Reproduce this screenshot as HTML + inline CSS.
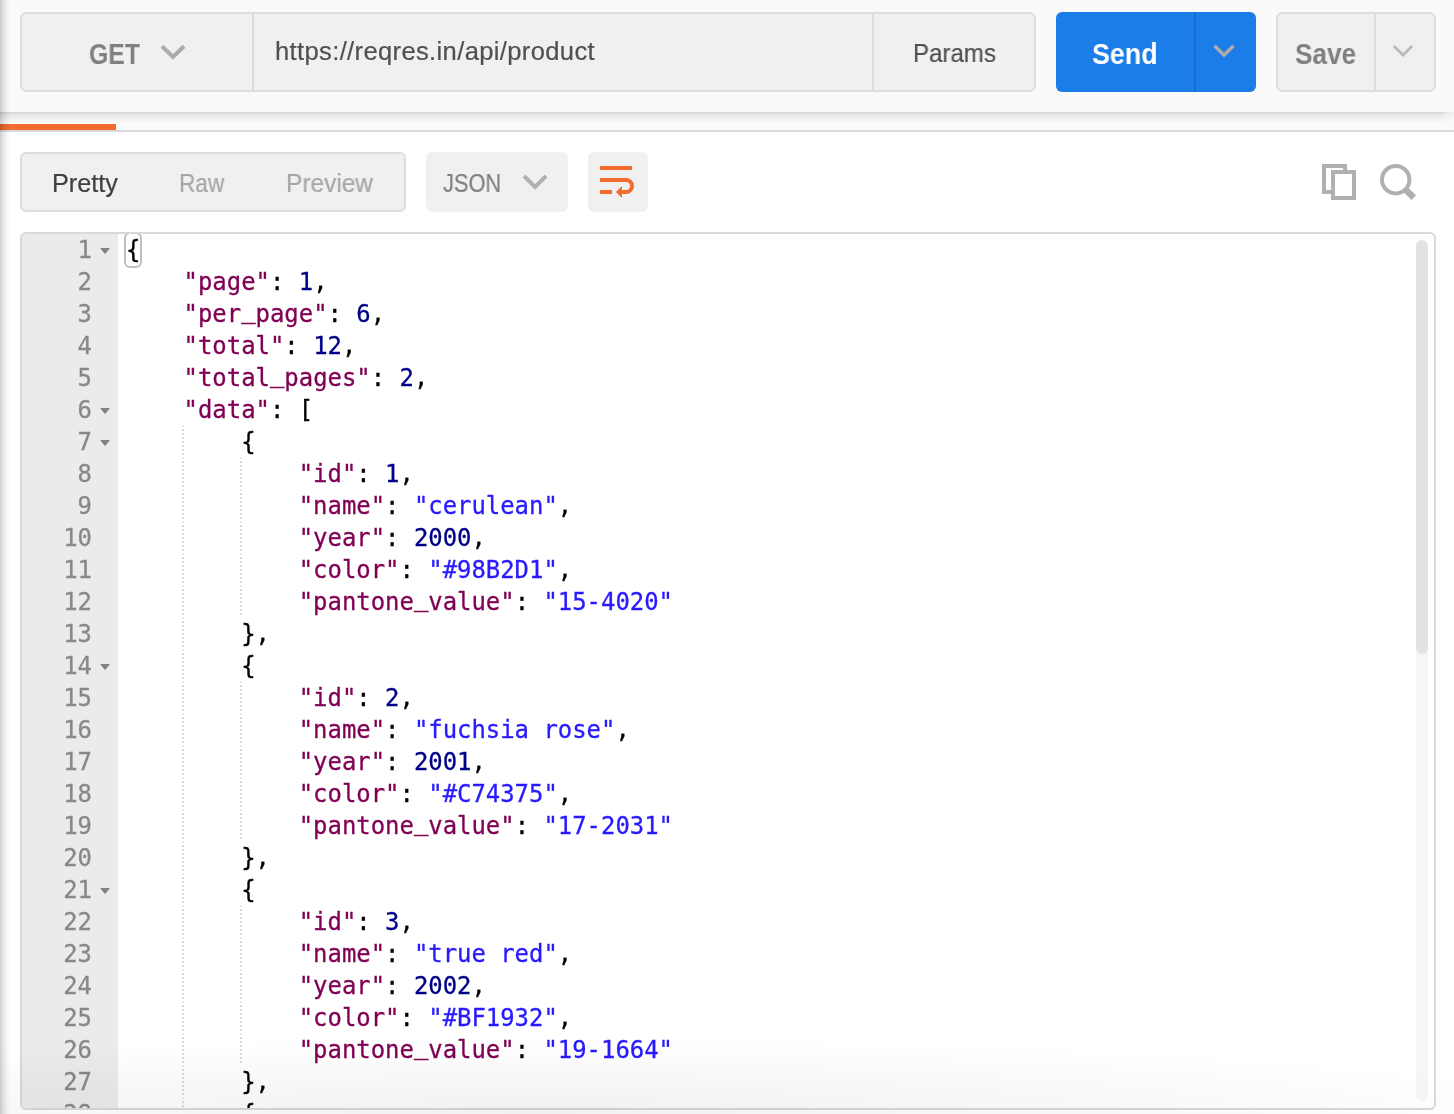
<!DOCTYPE html>
<html lang="en">
<head>
<meta charset="utf-8">
<title>Postman</title>
<style>
html,body{margin:0;padding:0;}
body{width:1454px;height:1114px;overflow:hidden;background:#fff;position:relative;
  font-family:"Liberation Sans","DejaVu Sans",sans-serif;color:#505050;}
*{box-sizing:border-box;}
.abs{position:absolute;}
/* top request bar */
#topbar{left:0;top:0;width:1454px;height:112px;background:#fafafa;}
#subbar{left:0;top:112px;width:1454px;height:20px;background:#fafafa;border-bottom:2px solid #dadada;}
#subshadow{left:0;top:112px;width:1454px;height:11px;background:linear-gradient(to bottom,#d6d6d6 0,#e6e6e6 3px,#f2f2f2 7px,#fafafa 11px);}
#active{left:0;top:124px;width:116px;height:6px;background:#f06c30;}
#urlbox{left:20px;top:12px;width:1016px;height:80px;background:#f0f0f0;border:2px solid #dcdcdc;border-radius:6px;}
.vdiv{width:2px;background:#dcdcdc;}
.t{position:absolute;white-space:nowrap;line-height:1;transform-origin:0 0;will-change:transform;}
#get{left:89px;top:39.8px;font-size:29px;font-weight:bold;color:#808080;transform:scaleX(.855);}
#url{left:274.5px;top:38.8px;font-size:25px;color:#505050;letter-spacing:.35px;transform:scaleX(1.022);-webkit-text-stroke:.2px;}
#params{left:912.5px;top:40.7px;font-size:25px;color:#505050;transform:scaleX(.962);-webkit-text-stroke:.2px;}
#send{left:1056px;top:12px;width:200px;height:80px;background:#1b7de8;border-radius:6px;}
#sendt{left:1091.5px;top:39.5px;font-size:29px;font-weight:bold;color:#fff;transform:scaleX(.925);}
#save{left:1276px;top:12px;width:160px;height:80px;background:#f0f0f0;border:2px solid #dcdcdc;border-radius:6px;}
#savet{left:1295px;top:39.5px;font-size:29px;font-weight:bold;color:#808080;transform:scaleX(.903);}
/* response toolbar */
#tabs{left:20px;top:152px;width:386px;height:60px;background:#f0f0f0;border:2px solid #dcdcdc;border-radius:6px;}
#pretty{left:52px;top:170.6px;font-size:25px;color:#404040;transform:scaleX(1.01);-webkit-text-stroke:.2px;}
#raw{left:179.3px;top:170.6px;font-size:25px;color:#a6a6a6;transform:scaleX(.905);-webkit-text-stroke:.2px;}
#preview{left:285.5px;top:170.6px;font-size:25px;color:#a6a6a6;transform:scaleX(.978);-webkit-text-stroke:.2px;}
#json{left:426px;top:152px;width:142px;height:60px;background:#f0f0f0;border-radius:6px;}
#jsont{left:443px;top:170.6px;font-size:25px;color:#808080;transform:scaleX(.873);-webkit-text-stroke:.2px;}
#wrap{left:588px;top:152px;width:60px;height:60px;background:#f0f0f0;border-radius:6px;}
svg{position:absolute;overflow:visible;}
/* editor */
#editor{left:20px;top:232px;width:1416px;height:878px;border:2px solid #d9d9d9;border-radius:6px;overflow:hidden;background:#fff;}
#gutter{left:0;top:0;width:96px;height:900px;background:#ebebeb;}
.mono{font-family:"DejaVu Sans Mono","Liberation Mono",monospace;font-size:23.92px;line-height:32px;will-change:transform;-webkit-text-stroke:.3px;}
.gl{position:relative;height:32px;color:#888;text-align:right;padding-right:26px;white-space:pre;}
.fa{position:absolute;left:78px;top:14px;width:0;height:0;border-left:5px solid transparent;border-right:5px solid transparent;border-top:6px solid #808080;}
#code{left:104px;top:0;width:1300px;color:#000;}
.cl{position:relative;height:32px;white-space:pre;}
.k{color:rgb(127,0,85);}
.u{font-weight:normal;position:relative;top:-4px;}
.n{color:#00008b;}
.s{color:rgb(40,26,255);}
.g{position:absolute;top:0;width:2px;height:32px;background:linear-gradient(#fff,#fff) 0 31px/2px 1px no-repeat,linear-gradient(to bottom,transparent 0,transparent 1px,#d9d9d9 1px,#d9d9d9 3px,transparent 3px) 0 2px/2px 4px repeat-y;}
.g1{left:56px;}
.g2{left:114px;}
#bracket{left:102px;top:-2px;width:18px;height:36px;border:2px solid #c0c0c0;border-radius:6px;}
#track{left:1394px;top:6px;width:12px;height:861px;border-radius:6px;background:#f6f6f6;}
#thumb{left:1394px;top:6px;width:12px;height:414px;border-radius:6px;background:#e2e2e2;}
#botshadow{left:0;top:1034px;width:1454px;height:80px;background:radial-gradient(ellipse 1050px 76px at 540px 100%,rgba(0,0,0,.055),rgba(0,0,0,.03) 45%,rgba(0,0,0,0) 100%);}
#leftshadow{left:0;top:0;width:10px;height:1114px;background:linear-gradient(to right,rgba(0,0,0,.19) 0,rgba(0,0,0,.08) 4px,rgba(0,0,0,0) 10px);}
</style>
</head>
<body>
<div id="topbar" class="abs"></div>
<div id="subbar" class="abs"></div>
<div id="subshadow" class="abs"></div>
<div id="active" class="abs"></div>
<div class="abs" style="left:1440px;top:112px;width:14px;height:12px;background:linear-gradient(to right,rgba(250,250,250,0),rgba(250,250,250,.75))"></div>

<div id="urlbox" class="abs"></div>
<div class="abs vdiv" style="left:252px;top:14px;height:76px"></div>
<div class="abs vdiv" style="left:872px;top:14px;height:76px"></div>
<div id="get" class="t">GET</div>
<svg style="left:159px;top:43px" width="28" height="20" viewBox="0 0 28 20"><path d="M3 3.2 L14 14 L25 3.2" fill="none" stroke="#ababab" stroke-width="4"/></svg>
<div id="url" class="t">https://reqres.in/api/product</div>
<div id="params" class="t">Params</div>

<div id="send" class="abs"></div>
<div class="abs" style="left:1194px;top:12px;width:2px;height:80px;background:#1a6fcd"></div>
<div id="sendt" class="t">Send</div>
<svg style="left:1212px;top:43px" width="24" height="16" viewBox="0 0 24 16"><path d="M2.5 2.8 L12 12 L21.5 2.8" fill="none" stroke="#adadad" stroke-width="3.6"/></svg>

<div id="save" class="abs"></div>
<div class="abs vdiv" style="left:1374px;top:14px;height:76px"></div>
<div id="savet" class="t">Save</div>
<svg style="left:1391px;top:43px" width="24" height="16" viewBox="0 0 24 16"><path d="M2.8 3 L12 12 L21.2 3" fill="none" stroke="#b9b9b9" stroke-width="2.8"/></svg>

<div id="tabs" class="abs"></div>
<div id="pretty" class="t">Pretty</div>
<div id="raw" class="t">Raw</div>
<div id="preview" class="t">Preview</div>
<div id="json" class="abs"></div>
<div id="jsont" class="t">JSON</div>
<svg style="left:521px;top:172px" width="28" height="20" viewBox="0 0 28 20"><path d="M3 4 L14 15 L25 4" fill="none" stroke="#b0b0b0" stroke-width="4"/></svg>
<div id="wrap" class="abs"></div>
<svg style="left:588px;top:152px" width="60" height="60" viewBox="0 0 60 60"><g fill="none" stroke="#f06c30" stroke-width="4"><path d="M12 16H44"/><path d="M12 28H38a6 6 0 0 1 0 12H33"/><path d="M12 40H24"/></g><path d="M28 40L34 34V46Z" fill="#f06c30"/></svg>

<svg style="left:1320px;top:160px" width="100" height="44" viewBox="1320 160 100 44"><g fill="none" stroke="#b0b0b0" stroke-width="4"><rect x="1324" y="166" width="21" height="26"/><rect x="1333" y="172" width="21" height="26" fill="#fff"/><circle cx="1395.7" cy="179.7" r="13.7"/></g><path d="M1405.6 189.6L1413.8 197.6" stroke="#b0b0b0" stroke-width="6.4" fill="none"/></svg>

<div id="editor" class="abs">
  <div id="gutter" class="abs mono">
<div class="gl">1<i class="fa"></i></div>
<div class="gl">2</div>
<div class="gl">3</div>
<div class="gl">4</div>
<div class="gl">5</div>
<div class="gl">6<i class="fa"></i></div>
<div class="gl">7<i class="fa"></i></div>
<div class="gl">8</div>
<div class="gl">9</div>
<div class="gl">10</div>
<div class="gl">11</div>
<div class="gl">12</div>
<div class="gl">13</div>
<div class="gl">14<i class="fa"></i></div>
<div class="gl">15</div>
<div class="gl">16</div>
<div class="gl">17</div>
<div class="gl">18</div>
<div class="gl">19</div>
<div class="gl">20</div>
<div class="gl">21<i class="fa"></i></div>
<div class="gl">22</div>
<div class="gl">23</div>
<div class="gl">24</div>
<div class="gl">25</div>
<div class="gl">26</div>
<div class="gl">27</div>
<div class="gl">28<i class="fa"></i></div>
  </div>
  <div id="bracket" class="abs"></div>
  <div id="code" class="abs mono">
<div class="cl">{</div>
<div class="cl">    <span class="k">"page"</span>: <span class="n">1</span>,</div>
<div class="cl">    <span class="k">"per<b class="u">_</b>page"</span>: <span class="n">6</span>,</div>
<div class="cl">    <span class="k">"total"</span>: <span class="n">12</span>,</div>
<div class="cl">    <span class="k">"total<b class="u">_</b>pages"</span>: <span class="n">2</span>,</div>
<div class="cl">    <span class="k">"data"</span>: [</div>
<div class="cl"><i class="g g1"></i>        {</div>
<div class="cl"><i class="g g1"></i><i class="g g2"></i>            <span class="k">"id"</span>: <span class="n">1</span>,</div>
<div class="cl"><i class="g g1"></i><i class="g g2"></i>            <span class="k">"name"</span>: <span class="s">"cerulean"</span>,</div>
<div class="cl"><i class="g g1"></i><i class="g g2"></i>            <span class="k">"year"</span>: <span class="n">2000</span>,</div>
<div class="cl"><i class="g g1"></i><i class="g g2"></i>            <span class="k">"color"</span>: <span class="s">"#98B2D1"</span>,</div>
<div class="cl"><i class="g g1"></i><i class="g g2"></i>            <span class="k">"pantone<b class="u">_</b>value"</span>: <span class="s">"15-4020"</span></div>
<div class="cl"><i class="g g1"></i>        },</div>
<div class="cl"><i class="g g1"></i>        {</div>
<div class="cl"><i class="g g1"></i><i class="g g2"></i>            <span class="k">"id"</span>: <span class="n">2</span>,</div>
<div class="cl"><i class="g g1"></i><i class="g g2"></i>            <span class="k">"name"</span>: <span class="s">"fuchsia rose"</span>,</div>
<div class="cl"><i class="g g1"></i><i class="g g2"></i>            <span class="k">"year"</span>: <span class="n">2001</span>,</div>
<div class="cl"><i class="g g1"></i><i class="g g2"></i>            <span class="k">"color"</span>: <span class="s">"#C74375"</span>,</div>
<div class="cl"><i class="g g1"></i><i class="g g2"></i>            <span class="k">"pantone<b class="u">_</b>value"</span>: <span class="s">"17-2031"</span></div>
<div class="cl"><i class="g g1"></i>        },</div>
<div class="cl"><i class="g g1"></i>        {</div>
<div class="cl"><i class="g g1"></i><i class="g g2"></i>            <span class="k">"id"</span>: <span class="n">3</span>,</div>
<div class="cl"><i class="g g1"></i><i class="g g2"></i>            <span class="k">"name"</span>: <span class="s">"true red"</span>,</div>
<div class="cl"><i class="g g1"></i><i class="g g2"></i>            <span class="k">"year"</span>: <span class="n">2002</span>,</div>
<div class="cl"><i class="g g1"></i><i class="g g2"></i>            <span class="k">"color"</span>: <span class="s">"#BF1932"</span>,</div>
<div class="cl"><i class="g g1"></i><i class="g g2"></i>            <span class="k">"pantone<b class="u">_</b>value"</span>: <span class="s">"19-1664"</span></div>
<div class="cl"><i class="g g1"></i>        },</div>
<div class="cl"><i class="g g1"></i>        {</div>
  </div>
  <div id="track" class="abs"></div>
  <div id="thumb" class="abs"></div>
</div>
<div id="botshadow" class="abs"></div>
<div id="leftshadow" class="abs"></div>
</body>
</html>
